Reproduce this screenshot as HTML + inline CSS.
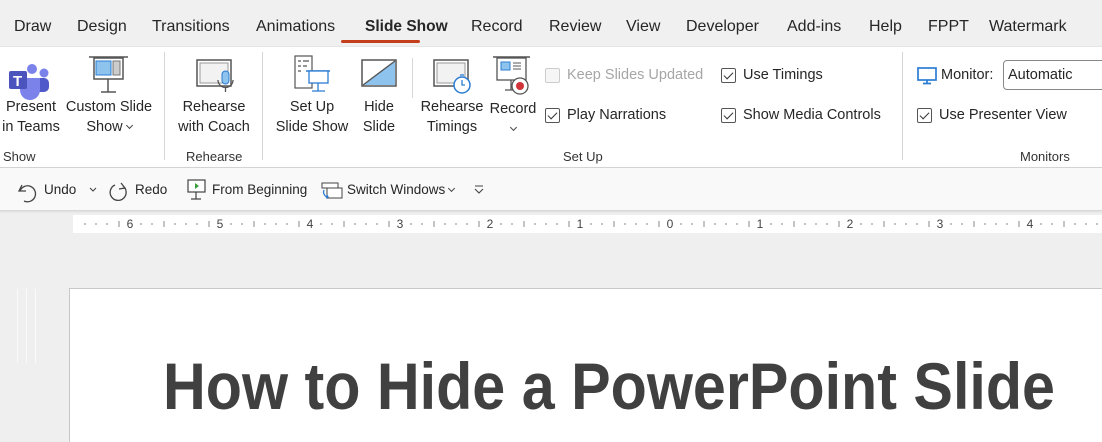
<!DOCTYPE html>
<html><head><meta charset="utf-8"><style>
*{margin:0;padding:0;box-sizing:border-box}
html{width:1102px;height:442px;overflow:hidden}
body{width:1102px;height:442px;overflow:hidden;background:#efefef;font-family:"Liberation Sans",sans-serif;color:#262626;position:relative}
.a{position:absolute;white-space:nowrap}
.tab{position:absolute;top:18px;font-size:16px;color:#262626}
.lbl{position:absolute;font-size:14.5px;text-align:center;line-height:20px;color:#262626}
.grp{position:absolute;top:149px;font-size:13px;color:#333}
.sep{position:absolute;top:52px;width:1px;height:108px;background:#d6d6d6}
.cb{position:absolute;width:15px;height:15px;border:1px solid #555;border-radius:2px;background:#fff}
.cb.on::after{content:"";position:absolute;left:4px;top:1px;width:4px;height:8px;border:solid #333;border-width:0 1.4px 1.4px 0;transform:rotate(45deg)}
.ct{position:absolute;font-size:14.5px;color:#262626}
.chev{display:inline-block;width:5px;height:5px;border:solid #444;border-width:0 1.2px 1.2px 0;transform:rotate(45deg);vertical-align:middle;margin:0 0 4px 4px}
</style></head><body>
<div class="a" style="left:0;top:0;width:1102px;height:46px;background:#f0f0f0"></div>
<div class="tab" style="left:14px">Draw</div>
<div class="tab" style="left:77px">Design</div>
<div class="tab" style="left:152px">Transitions</div>
<div class="tab" style="left:256px">Animations</div>
<div class="tab" style="left:365px;font-weight:bold;font-size:15.5px">Slide Show</div>
<div class="a" style="left:341px;top:40px;width:79px;height:3px;background:#c43e1c;border-radius:2px"></div>
<div class="tab" style="left:471px">Record</div>
<div class="tab" style="left:549px">Review</div>
<div class="tab" style="left:626px">View</div>
<div class="tab" style="left:686px">Developer</div>
<div class="tab" style="left:787px">Add-ins</div>
<div class="tab" style="left:869px">Help</div>
<div class="tab" style="left:928px">FPPT</div>
<div class="tab" style="left:989px">Watermark</div>

<div class="a" style="left:0;top:46px;width:1102px;height:122px;background:#fff;border-top:1px solid #e5e5e5;border-bottom:1px solid #d4d4d4"></div>

<svg class="a" style="left:0;top:50px" width="1102" height="60" viewBox="0 50 1102 60">
 <circle cx="44" cy="73" r="4.5" fill="#7b83eb"/><circle cx="32" cy="69" r="5" fill="#7b83eb"/>
 <rect x="30" y="78" width="19" height="14" rx="5" fill="#5059c9"/>
 <path d="M20 78h20v12a10 10 0 0 1-20 0z" fill="#7b83eb"/>
 <rect x="9" y="71" width="18" height="18" rx="2" fill="#4b53bc"/>
 <text x="13" y="86" font-size="15" font-weight="bold" fill="#fff" font-family="Liberation Sans">T</text>
 <line x1="89" y1="57" x2="128" y2="57" stroke="#555" stroke-width="1.5"/>
 <rect x="94" y="58" width="29" height="21" fill="#fff" stroke="#555" stroke-width="1.5"/>
 <rect x="96" y="61" width="15" height="14" fill="#8ec3ee" stroke="#2b7cd3"/>
 <rect x="113" y="61" width="7" height="14" fill="#ccc" stroke="#777"/>
 <line x1="108" y1="79" x2="108" y2="92" stroke="#555" stroke-width="1.5"/><line x1="101" y1="92" x2="116" y2="92" stroke="#555" stroke-width="1.5"/>
 <rect x="197" y="60" width="34" height="26" fill="#fff" stroke="#555" stroke-width="1.5"/>
 <rect x="200" y="63" width="28" height="20" fill="#f2f2f2" stroke="#999"/>
 <rect x="222" y="71" width="7" height="13" rx="3.5" fill="#8ec3ee" stroke="#2b7cd3"/>
 <path d="M218 80a7 7 0 0 0 15 0M225.5 87v5" fill="none" stroke="#555" stroke-width="1.3"/>
 <rect x="295" y="56" width="17" height="32" fill="#fff" stroke="#555" stroke-width="1.2"/>
 <path d="M298 61h3M303 61h6M298 66h3M303 66h4M298 71h3" stroke="#555" stroke-width="1.2"/>
 <line x1="306" y1="71" x2="330" y2="71" stroke="#2b7cd3" stroke-width="1.5"/>
 <rect x="309" y="71" width="19" height="12" fill="#fff" stroke="#2b7cd3" stroke-width="1.3"/>
 <path d="M318 83v8M312 91h13" stroke="#2b7cd3" stroke-width="1.3"/>
 <rect x="362" y="60" width="34" height="26" fill="#fff" stroke="#555" stroke-width="1.5"/>
 <path d="M363 85L395 61V85z" fill="#8ec3ee"/><line x1="363" y1="85" x2="395" y2="61" stroke="#555" stroke-width="1.3"/>
 <rect x="434" y="60" width="34" height="26" fill="#fff" stroke="#555" stroke-width="1.5"/>
 <rect x="437" y="63" width="28" height="20" fill="#f2f2f2" stroke="#999"/>
 <circle cx="462" cy="85" r="8" fill="#fff" stroke="#2b7cd3" stroke-width="1.5"/>
 <path d="M462 80v5h3M460 75h4" stroke="#2b7cd3" stroke-width="1.3" fill="none"/>
 <line x1="493" y1="57" x2="530" y2="57" stroke="#555" stroke-width="1.5"/>
 <rect x="497" y="58" width="29" height="22" fill="#fff" stroke="#555" stroke-width="1.3"/>
 <rect x="501" y="62" width="9" height="8" fill="#8ec3ee" stroke="#2b7cd3"/>
 <path d="M513 63h8M513 66h8M513 69h8" stroke="#555"/>
 <path d="M511 80v10M505 90h8" stroke="#555" stroke-width="1.3"/>
 <circle cx="520" cy="86" r="8" fill="#fff" stroke="#555" stroke-width="1.3"/><circle cx="520" cy="86" r="4" fill="#d13438"/>
 <rect x="918" y="68" width="18" height="12" fill="#fff" stroke="#2b7cd3" stroke-width="1.7"/>
 <path d="M927 80v3M923 83.5h8" stroke="#2b7cd3" stroke-width="1.7"/>
</svg>

<div class="lbl" style="left:0;top:97px;width:62px">Present<br>in Teams</div>
<div class="lbl" style="left:62px;top:97px;width:94px">Custom Slide<br>Show<span class="chev"></span></div>
<div class="lbl" style="left:170px;top:97px;width:88px">Rehearse<br>with Coach</div>
<div class="lbl" style="left:270px;top:97px;width:84px">Set Up<br>Slide Show</div>
<div class="lbl" style="left:354px;top:97px;width:50px">Hide<br>Slide</div>
<div class="lbl" style="left:418px;top:97px;width:68px">Rehearse<br>Timings</div>
<div class="lbl" style="left:486px;top:99px;width:54px">Record<br><span class="chev" style="margin-left:0"></span></div>
<div class="sep" style="left:164px"></div><div class="sep" style="left:262px"></div>
<div class="sep" style="left:412px;top:58px;height:40px"></div><div class="sep" style="left:902px"></div>
<div class="grp" style="left:3px">Show</div>
<div class="grp" style="left:186px">Rehearse</div>
<div class="grp" style="left:563px">Set Up</div>
<div class="grp" style="left:1020px">Monitors</div>

<div class="cb" style="left:545px;top:68px;border-color:#ccc;background:#f6f6f6"></div><div class="ct" style="left:567px;top:67px;color:#a6a6a6">Keep Slides Updated</div>
<div class="cb on" style="left:545px;top:108px"></div><div class="ct" style="left:567px;top:107px">Play Narrations</div>
<div class="cb on" style="left:721px;top:68px"></div><div class="ct" style="left:743px;top:67px">Use Timings</div>
<div class="cb on" style="left:721px;top:108px"></div><div class="ct" style="left:743px;top:107px">Show Media Controls</div>
<div class="ct" style="left:941px;top:67px">Monitor:</div>
<div class="a" style="left:1003px;top:60px;width:110px;height:30px;border:1px solid #888;border-radius:4px;background:#fff;font-size:14.5px;padding:6px 0 0 4px">Automatic</div>
<div class="cb on" style="left:917px;top:108px"></div><div class="ct" style="left:939px;top:107px">Use Presenter View</div>

<div class="a" style="left:0;top:168px;width:1102px;height:43px;background:#f9f9f9;border-bottom:1px solid #d8d8d8;box-shadow:0 1px 2px rgba(0,0,0,.08)"></div>
<svg class="a" style="left:0;top:176px" width="500" height="30">
 <path d="M22 9l-3 6h7M20 15a8 8 0 1 1 4 10" fill="none" stroke="#444" stroke-width="1.3"/>
 <path d="M90 12l3 3 3-3" fill="none" stroke="#444" stroke-width="1.1"/>
 <path d="M121 7l4 5-6 1M123 10a8 8 0 1 1-8-1" fill="none" stroke="#444" stroke-width="1.3"/>
 <rect x="188" y="4" width="17" height="12" fill="#fff" stroke="#444" stroke-width="1.2"/><path d="M195 7l4 3-4 3z" fill="#3a9b3a"/>
 <path d="M196 16v7M191 23h10" stroke="#444" stroke-width="1.2"/>
 <rect x="322" y="7" width="16" height="5" fill="#fff" stroke="#444"/><rect x="327" y="12" width="15" height="10" fill="#fff" stroke="#444"/>
 <path d="M324 14a5 5 0 0 0 4 7M326 22l2-1-1-2" fill="none" stroke="#2b7cd3" stroke-width="1.3"/>
 <path d="M475 10h8M475 13l4 4 4-4" fill="none" stroke="#444" stroke-width="1.1"/>
</svg>
<div class="ct" style="left:44px;top:182px;font-size:13.5px">Undo</div>
<div class="ct" style="left:135px;top:182px;font-size:13.5px">Redo</div>
<div class="ct" style="left:212px;top:182px;font-size:13.5px">From Beginning</div>
<div class="ct" style="left:347px;top:182px;font-size:13.5px">Switch Windows<span class="chev"></span></div>

<svg class="a" style="left:0;top:215px" width="1102" height="20">
 <rect x="73" y="0" width="1029" height="18" fill="#fff"/>
 <g stroke="#888" stroke-width="1">
 <path d="M85 8v2M96 8v2M107 8v2M119 6v6M141 8v2M152 8v2M164 6v6M175 8v2M186 8v2M197 8v2M209 6v6M231 8v2M242 8v2M254 6v6M265 8v2M276 8v2M287 8v2M299 6v6M321 8v2M332 8v2M344 6v6M355 8v2M366 8v2M377 8v2M389 6v6M411 8v2M422 8v2M434 6v6M445 8v2M456 8v2M467 8v2M479 6v6M501 8v2M512 8v2M524 6v6M535 8v2M546 8v2M557 8v2M569 6v6M591 8v2M602 8v2M614 6v6M625 8v2M636 8v2M647 8v2M659 6v6M681 8v2M692 8v2M704 6v6M715 8v2M726 8v2M737 8v2M749 6v6M771 8v2M782 8v2M794 6v6M805 8v2M816 8v2M827 8v2M839 6v6M861 8v2M872 8v2M884 6v6M895 8v2M906 8v2M917 8v2M929 6v6M951 8v2M962 8v2M974 6v6M985 8v2M996 8v2M1007 8v2M1019 6v6M1041 8v2M1052 8v2M1064 6v6M1075 8v2M1086 8v2M1097 8v2"/>
 </g>
 <g font-size="12" fill="#444" text-anchor="middle" font-family="Liberation Sans">
 <text x="130" y="13">6</text><text x="220" y="13">5</text><text x="310" y="13">4</text><text x="400" y="13">3</text><text x="490" y="13">2</text><text x="580" y="13">1</text><text x="670" y="13">0</text><text x="760" y="13">1</text><text x="850" y="13">2</text><text x="940" y="13">3</text><text x="1030" y="13">4</text>
 </g>
</svg>
<div class="a" style="left:17px;top:289px;width:1px;height:74px;background:#fafafa"></div>
<div class="a" style="left:26px;top:289px;width:1px;height:74px;background:#fafafa"></div>
<div class="a" style="left:35px;top:289px;width:1px;height:74px;background:#fafafa"></div>

<div class="a" style="left:69px;top:288px;width:1033px;height:154px;background:#fff;border-left:1px solid #c8c8c8;border-top:1px solid #c8c8c8"></div>
<svg class="a" style="left:0;top:340px" width="1102" height="80">
 <text x="163" y="69" font-size="66" font-weight="bold" fill="#404040" font-family="Liberation Sans" textLength="892" lengthAdjust="spacingAndGlyphs">How to Hide a PowerPoint Slide</text>
</svg>
</body></html>
